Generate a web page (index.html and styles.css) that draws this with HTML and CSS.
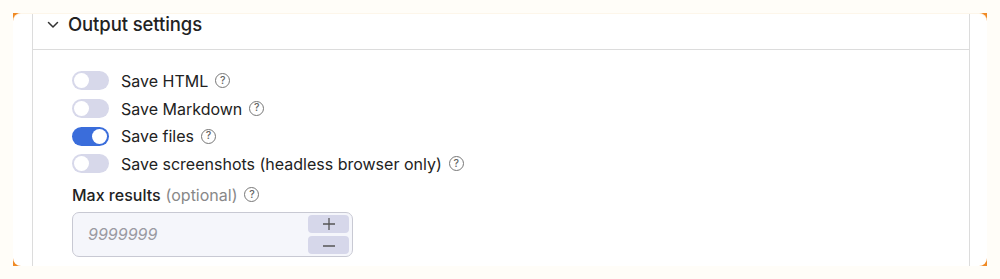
FILE: index.html
```html
<!DOCTYPE html>
<html>
<head>
<meta charset="utf-8">
<link rel="stylesheet" href="styles.css">
</head>
<body>
<div class="frame">
  <div class="sheet">
    <div class="panel">
      <div class="panel-head">
        <svg class="chev" width="12" height="8" viewBox="0 0 12 8"><path d="M1.5 1.5 L6 6 L10.5 1.5" fill="none" stroke="#333" stroke-width="1.5" stroke-linecap="round" stroke-linejoin="round"/></svg>
        <span class="title">Output settings</span>
      </div>
      <div class="panel-body">
        <div class="row"><span class="toggle"><span class="knob"></span></span><span class="label">Save HTML</span><span class="help">?</span></div>
        <div class="row"><span class="toggle"><span class="knob"></span></span><span class="label">Save Markdown</span><span class="help">?</span></div>
        <div class="row"><span class="toggle on"><span class="knob"></span></span><span class="label">Save files</span><span class="help">?</span></div>
        <div class="row"><span class="toggle"><span class="knob"></span></span><span class="label">Save screenshots (headless browser only)</span><span class="help">?</span></div>
        <div class="field-label">Max results <span class="opt">(optional)</span><span class="help">?</span></div>
        <div class="input">
          <span class="placeholder">9999999</span>
          <div class="stepper">
            <span class="step"><svg width="14" height="14" viewBox="0 0 14 14"><path d="M7 1 V13 M1 7 H13" stroke="#555" stroke-width="1.3" fill="none"/></svg></span>
            <span class="step"><svg width="14" height="14" viewBox="0 0 14 14"><path d="M1 8 H13" stroke="#555" stroke-width="1.3" fill="none"/></svg></span>
          </div>
        </div>
      </div>
    </div>
  </div>
</div>
</body>
</html>
```
FILE: styles.css
```css
* { box-sizing: border-box; }
html, body { margin: 0; padding: 0; }
body {
  background: #fffdf8;
  width: 1000px;
  height: 279px;
  overflow: hidden;
  font-family: Inter, "Liberation Sans", sans-serif;
  color: #222;
  padding: 13px;
}
.frame {
  width: 974px;
  height: 253px;
  background: #f08a24;
}
.sheet {
  width: 100%;
  height: 100%;
  background: #fff;
  border-radius: 8px;
  border-top: 1px solid #fdf6ea;
  padding: 0 17px 0 19px;
  overflow: hidden;
}
.panel {
  height: 100%;
  border-left: 1px solid #dcdcdc;
  border-right: 1px solid #dcdcdc;
}
.panel-head {
  height: 36px;
  border-bottom: 1px solid #dcdcdc;
  display: flex;
  align-items: center;
  padding-left: 14px;
  padding-bottom: 15px;
}
.chev { margin-right: 9px; margin-top: 1px; }
.title { font-size: 18.5px; font-weight: 500; color: #222; letter-spacing: -0.1px; }
.panel-body { padding: 17px 0 0 39px; }
.row {
  display: flex;
  align-items: center;
  height: 27.7px;
}
.toggle {
  width: 37px;
  height: 19px;
  border-radius: 10px;
  background: #d7d8ea;
  position: relative;
  margin-right: 12px;
  flex: none;
}
.knob {
  position: absolute;
  left: 2px;
  top: 2px;
  width: 15px;
  height: 15px;
  border-radius: 50%;
  background: #fff;
}
.toggle.on { background: #3a6ddb; }
.toggle.on .knob { left: 20px; }
.label { font-size: 16px; color: #222; }
.help {
  display: inline-flex;
  align-items: center;
  justify-content: center;
  width: 15px;
  height: 15px;
  border: 1.2px solid #777;
  border-radius: 50%;
  font-size: 10.5px;
  font-weight: 500;
  color: #666;
  margin-left: 7px;
  line-height: 1;
}
.field-label {
  font-size: 16px;
  font-weight: 500;
  color: #222;
  display: flex;
  align-items: center;
  height: 28px;
  margin-top: 3px;
}
.opt { color: #888; font-weight: 400; margin-left: 5px; }
.input {
  margin-top: 3px;
  width: 281px;
  height: 45px;
  border: 1px solid #c8c9d3;
  border-radius: 7px;
  background: #f5f6fb;
  display: flex;
  align-items: center;
  justify-content: space-between;
  padding: 0 3px 0 15px;
}
.placeholder { font-size: 16px; font-style: italic; color: #9a9aa2; }
.stepper { display: flex; flex-direction: column; gap: 3px; }
.step {
  width: 41px;
  height: 18px;
  background: #d6d7ea;
  border-radius: 4px;
  display: flex;
  align-items: center;
  justify-content: center;
}
```
